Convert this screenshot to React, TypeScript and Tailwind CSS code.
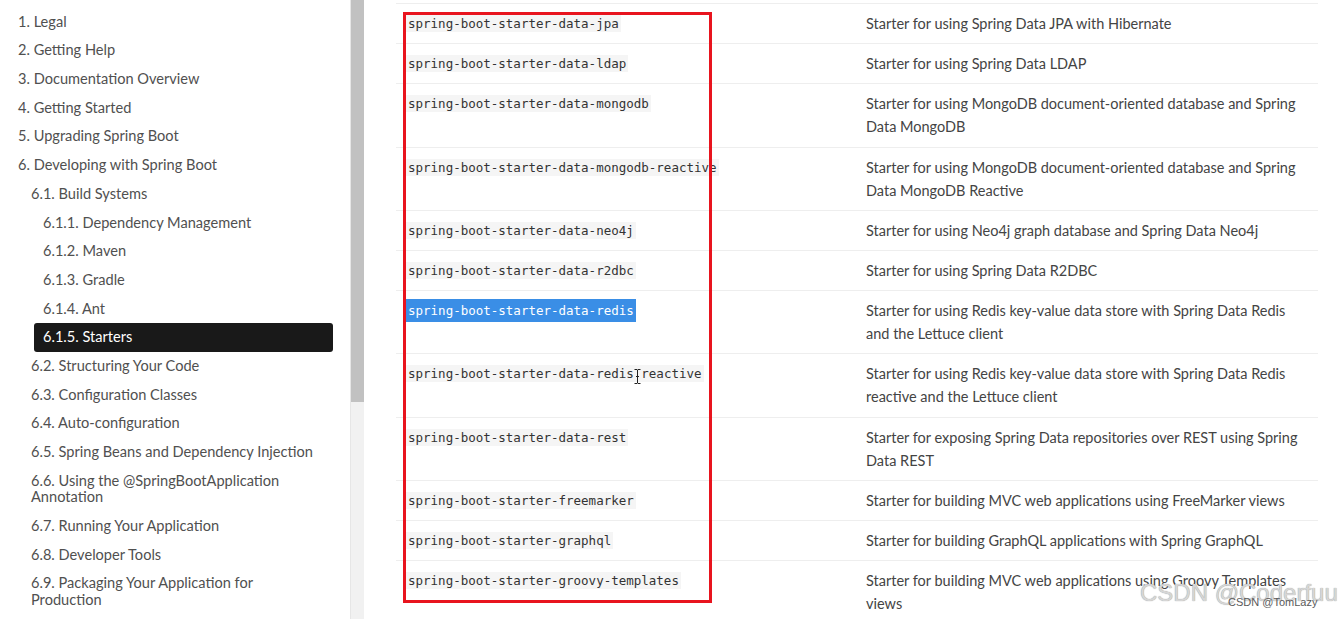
const navItems = [
  { label: '1. Legal', level: 1 },
  { label: '2. Getting Help', level: 1 },
  { label: '3. Documentation Overview', level: 1 },
  { label: '4. Getting Started', level: 1 },
  { label: '5. Upgrading Spring Boot', level: 1 },
  { label: '6. Developing with Spring Boot', level: 1 },
  { label: '6.1. Build Systems', level: 2 },
  { label: '6.1.1. Dependency Management', level: 3 },
  { label: '6.1.2. Maven', level: 3 },
  { label: '6.1.3. Gradle', level: 3 },
  { label: '6.1.4. Ant', level: 3 },
  { label: '6.1.5. Starters', level: 3, active: true },
  { label: '6.2. Structuring Your Code', level: 2 },
  { label: '6.3. Configuration Classes', level: 2 },
  { label: '6.4. Auto-configuration', level: 2 },
  { label: '6.5. Spring Beans and Dependency Injection', level: 2 },
  { label: '6.6. Using the @SpringBootApplication Annotation', level: 2 },
  { label: '6.7. Running Your Application', level: 2 },
  { label: '6.8. Developer Tools', level: 2 },
  { label: '6.9. Packaging Your Application for Production', level: 2 },
];

const starters = [
  { name: 'spring-boot-starter-data-jpa', desc: 'Starter for using Spring Data JPA with Hibernate' },
  { name: 'spring-boot-starter-data-ldap', desc: 'Starter for using Spring Data LDAP' },
  { name: 'spring-boot-starter-data-mongodb', desc: 'Starter for using MongoDB document-oriented database and Spring Data MongoDB' },
  { name: 'spring-boot-starter-data-mongodb-reactive', desc: 'Starter for using MongoDB document-oriented database and Spring Data MongoDB Reactive' },
  { name: 'spring-boot-starter-data-neo4j', desc: 'Starter for using Neo4j graph database and Spring Data Neo4j' },
  { name: 'spring-boot-starter-data-r2dbc', desc: 'Starter for using Spring Data R2DBC' },
  { name: 'spring-boot-starter-data-redis', desc: 'Starter for using Redis key-value data store with Spring Data Redis and the Lettuce client', selected: true },
  { name: 'spring-boot-starter-data-redis-reactive', desc: 'Starter for using Redis key-value data store with Spring Data Redis reactive and the Lettuce client', cursor: true },
  { name: 'spring-boot-starter-data-rest', desc: 'Starter for exposing Spring Data repositories over REST using Spring Data REST' },
  { name: 'spring-boot-starter-freemarker', desc: 'Starter for building MVC web applications using FreeMarker views' },
  { name: 'spring-boot-starter-graphql', desc: 'Starter for building GraphQL applications with Spring GraphQL' },
  { name: 'spring-boot-starter-groovy-templates', desc: 'Starter for building MVC web applications using Groovy Templates views' },
];

const indent: Record<number, string> = {
  1: 'ml-[9px]',
  2: 'ml-[22px]',
  3: 'ml-[34px]',
};

function IBeam() {
  return (
    <svg width="7" height="15" viewBox="0 0 7 15" className="absolute left-[0px] top-[3px]">
      <path d="M0.5 0.5h2.5l0.5 0.5 0.5-0.5h2.5M3.5 1v13M0.5 14.5h2.5l0.5-0.5 0.5 0.5h2.5M2 7.5h3" stroke="#222" strokeWidth="1" fill="none" />
    </svg>
  );
}

function StarterCode({ name, selected, cursor }: { name: string; selected?: boolean; cursor?: boolean }) {
  if (selected) {
    return <span className="bg-[#3a8ee6] px-[2px] py-[4px] text-white">{name}</span>;
  }
  if (cursor) {
    return (
      <span className="bg-[#f5f5f5] px-[2px] py-[1px] text-[#333333]">
        spring-boot-starter-data-redis
        <span className="relative text-[#f5f5f5]">
          -
          <IBeam />
        </span>
        reactive
      </span>
    );
  }
  return <span className="bg-[#f5f5f5] px-[2px] py-[1px] text-[#333333]">{name}</span>;
}

export default function App() {
  return (
    <div className="relative flex h-[619px] w-[1339px] overflow-hidden bg-white font-['Lato',sans-serif]">
      <aside className="flex shrink-0">
        <nav className="w-[350px] pt-[7.6px] pr-[17px]">
          <ul>
            {navItems.map((item) => (
              <li
                key={item.label}
                className={`${indent[item.level]} rounded-[3px] px-[9px] py-[6.1px] text-[14.6px] leading-[16.5px] ${
                  item.active ? 'bg-[#191919] text-white' : 'text-[#505050]'
                }`}
              >
                {item.label}
              </li>
            ))}
          </ul>
        </nav>
        <div className="w-[14px] border-l border-[#e6e6e6] bg-[#f1f1f1]">
          <div className="h-[402px] w-full bg-[#c1c1c1]" />
        </div>
      </aside>

      <main className="flex-1 pt-[3px] pl-[32px] pr-[21px]">
        <div className="border-t border-[#eeeeee]">
          {starters.map((s) => (
            <div key={s.name} className="grid grid-cols-[458px_1fr] border-b border-[#eeeeee]">
              <div className="py-[8.1px] pl-[10px] font-['DejaVu_Sans_Mono',monospace] text-[12.5px] leading-[23px]">
                <StarterCode name={s.name} selected={s.selected} cursor={s.cursor} />
              </div>
              <div className="py-[8.1px] pl-[12px] pr-[9px] text-[14.5px] leading-[23px] text-[#444444]">
                {s.desc}
              </div>
            </div>
          ))}
        </div>
      </main>

      {/* red annotation frame */}
      <div className="pointer-events-none absolute left-[403px] top-[12px] h-[591px] w-[309px] border-[3px] border-[#e8141e]" />

      {/* watermark */}
      <div className="pointer-events-none absolute left-[1140px] top-[578px] font-['Liberation_Sans',sans-serif] text-[24px] leading-[30px] whitespace-nowrap text-[#d6d6d6] [text-shadow:0_0_1px_#8a8a8a]">
        CSDN @Coderfuu
      </div>
      <div className="pointer-events-none absolute left-[1228px] top-[595px] font-['Liberation_Sans',sans-serif] text-[11px] leading-[14px] whitespace-nowrap text-[#5a5a5a]">
        CSDN @TomLazy
      </div>
    </div>
  );
}
